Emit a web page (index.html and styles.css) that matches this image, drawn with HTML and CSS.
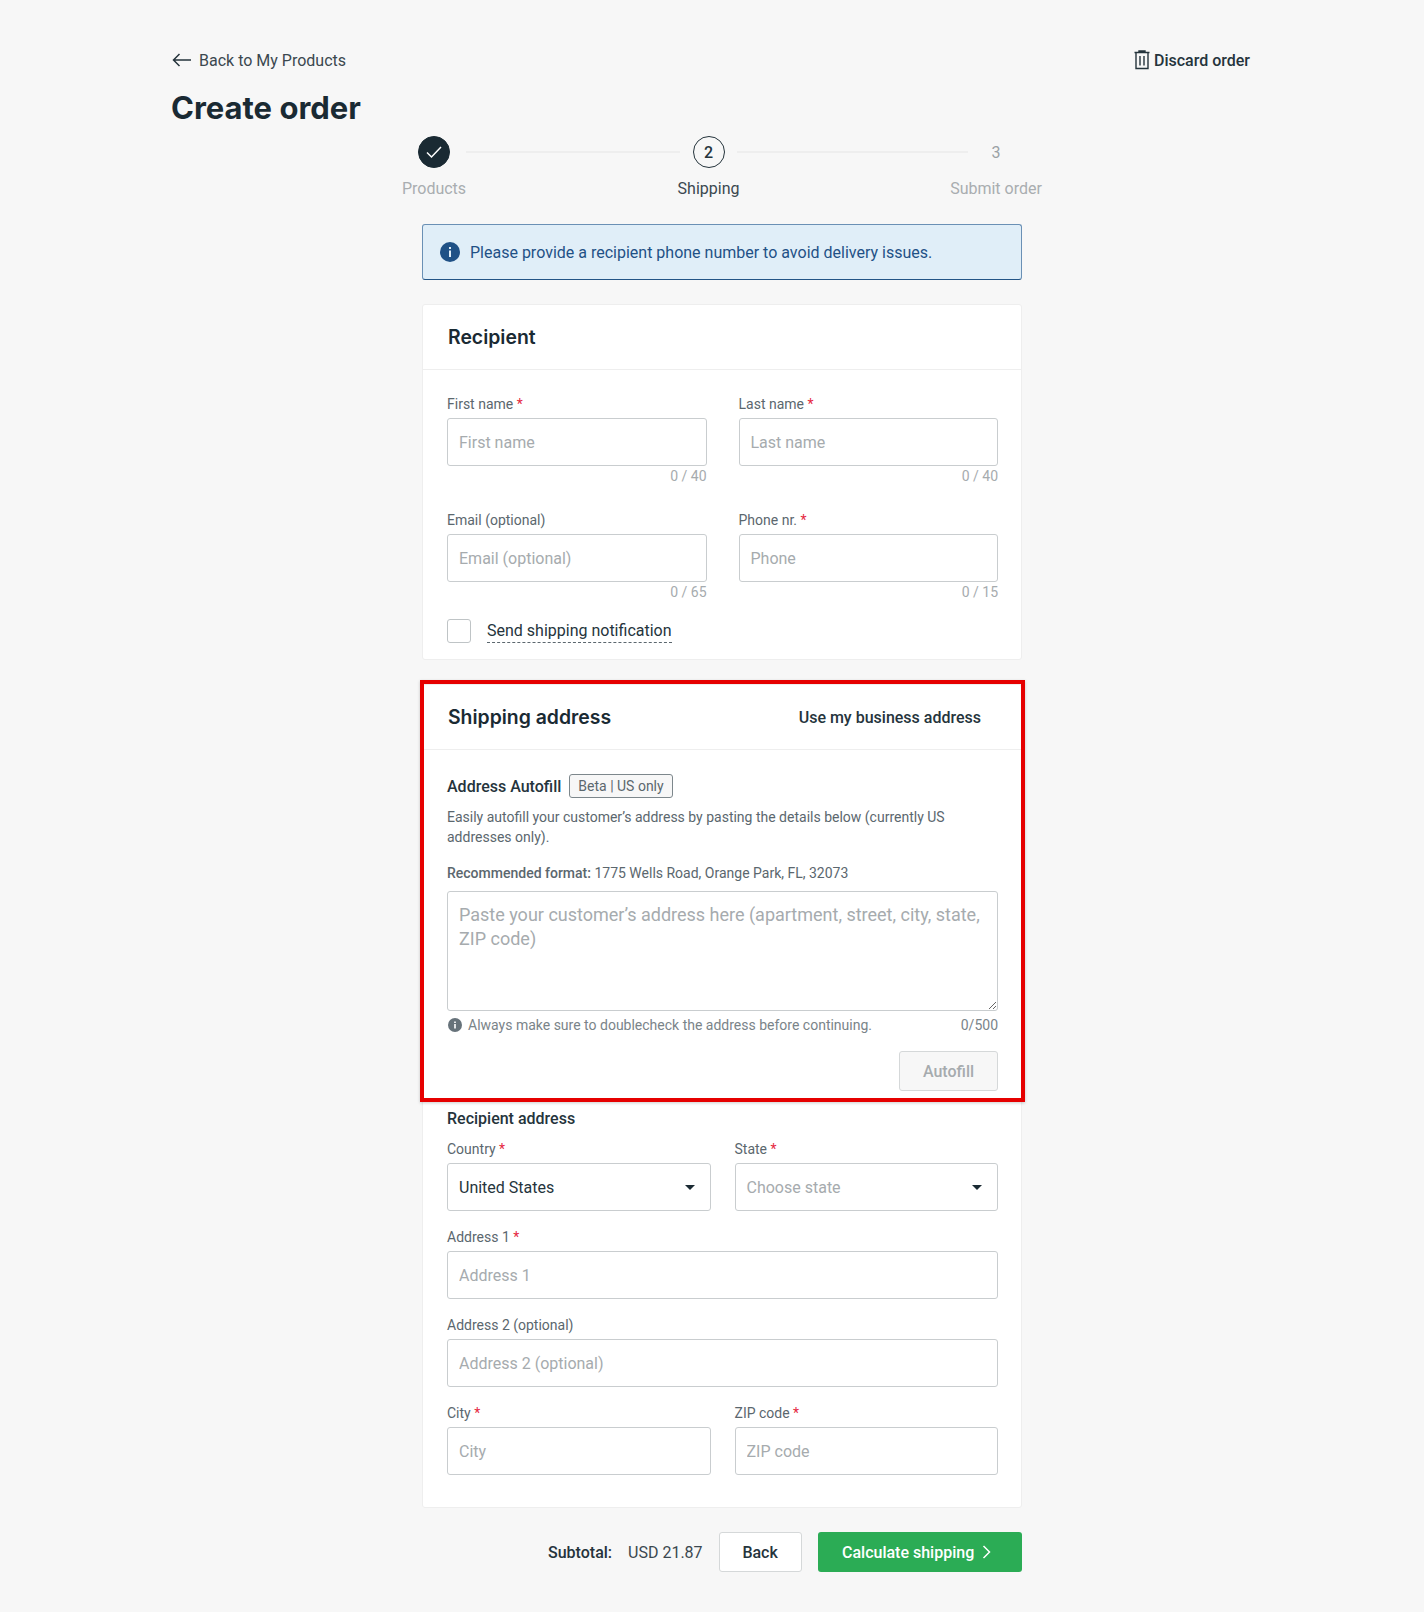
FILE: index.html
```html
<!DOCTYPE html>
<html lang="en">
<head>
<meta charset="utf-8">
<title>Create order</title>
<link rel="stylesheet" href="styles.css">
</head>
<body>
<div class="page">
  <div class="topbar">
    <a class="back-link">
      <svg class="back-icon" width="20" height="14" viewBox="0 0 20 14" fill="none" stroke="#25343c" stroke-width="1.5"><path d="M19 7H1.5M7.5 1L1.5 7l6 6"/></svg>
      Back to My Products
    </a>
    <a class="discard">
      <svg width="16" height="20" viewBox="0 0 16 20" fill="none" stroke="#25343c" stroke-width="1.4"><path d="M0.5 2.5h15M5 2.5V1h6v1.500M2 2.500h12v16H2zM6 6v9.500M10 6v9.500"/></svg>
      Discard order
    </a>
  </div>
  <h1 class="title">Create order</h1>

  <div class="content">
    <div class="stepper">
      <div class="circle done"><svg width="18" height="14" viewBox="0 0 18 14" fill="none" stroke="#fff" stroke-width="1.500"><path d="M2 7.500l4.500 4.500L16 2"/></svg></div>
      <div class="line"></div>
      <div class="circle current">2</div>
      <div class="line"></div>
      <div class="circle pending">3</div>
      <div class="step-label muted">Products</div>
      <div></div>
      <div class="step-label">Shipping</div>
      <div></div>
      <div class="step-label muted">Submit order</div>
    </div>

    <div class="alert">
      <svg width="20" height="20" viewBox="0 0 20 20"><circle cx="10" cy="10" r="10" fill="#1f5186"/><rect x="9" y="8.500" width="2" height="6.500" fill="#e0eef8"/><rect x="9" y="5" width="2" height="2" fill="#e0eef8"/></svg>
      <span>Please provide a recipient phone number to avoid delivery issues.</span>
    </div>

    <section class="card recipient">
      <header class="card-head"><h2 class="card-title">Recipient</h2></header>
      <div class="card-body">
        <div class="grid-two wide-gap">
          <div class="field">
            <label class="label">First name <i class="req">*</i></label>
            <input class="input" placeholder="First name">
            <div class="count">0 / 40</div>
          </div>
          <div class="field">
            <label class="label">Last name <i class="req">*</i></label>
            <input class="input" placeholder="Last name">
            <div class="count">0 / 40</div>
          </div>
          <div class="field">
            <label class="label">Email (optional)</label>
            <input class="input" placeholder="Email (optional)">
            <div class="count">0 / 65</div>
          </div>
          <div class="field">
            <label class="label">Phone nr. <i class="req">*</i></label>
            <input class="input" placeholder="Phone">
            <div class="count">0 / 15</div>
          </div>
        </div>
        <div class="notify">
          <span class="checkbox"></span>
          <span class="notify-text">Send shipping notification</span>
        </div>
      </div>
    </section>

    <section class="card shipping">
      <div class="highlight"></div>
      <header class="card-head split">
        <h2 class="card-title">Shipping address</h2>
        <a class="head-link">Use my business address</a>
      </header>
      <div class="card-body ship-body">
        <div class="autofill-title">
          <strong>Address Autofill</strong>
          <span class="badge">Beta | US only</span>
        </div>
        <p class="desc">Easily autofill your customer’s address by pasting the details below (currently US addresses only).</p>
        <p class="format"><b>Recommended format:</b> 1775 Wells Road, Orange Park, FL, 32073</p>
        <textarea class="textarea" placeholder="Paste your customer’s address here (apartment, street, city, state, ZIP code)"></textarea>
        <div class="hint-row">
          <svg width="14" height="14" viewBox="0 0 14 14"><circle cx="7" cy="7" r="7" fill="#66727a"/><rect x="6.200" y="6" width="1.600" height="4.500" fill="#fff"/><rect x="6.200" y="3.500" width="1.600" height="1.500" fill="#fff"/></svg>
          <span class="hint">Always make sure to doublecheck the address before continuing.</span>
          <span class="hint-count">0/500</span>
        </div>
        <div class="autofill-row"><button class="btn-disabled">Autofill</button></div>

        <h3 class="sub-title">Recipient address</h3>
        <div class="grid-two address-grid">
          <div class="field">
            <label class="label">Country <i class="req">*</i></label>
            <div class="select"><span>United States</span><i class="caret"></i></div>
          </div>
          <div class="field">
            <label class="label">State <i class="req">*</i></label>
            <div class="select placeholder"><span>Choose state</span><i class="caret"></i></div>
          </div>
          <div class="field span-two">
            <label class="label">Address 1 <i class="req">*</i></label>
            <input class="input" placeholder="Address 1">
          </div>
          <div class="field span-two">
            <label class="label">Address 2 (optional)</label>
            <input class="input" placeholder="Address 2 (optional)">
          </div>
          <div class="field">
            <label class="label">City <i class="req">*</i></label>
            <input class="input" placeholder="City">
          </div>
          <div class="field">
            <label class="label">ZIP code <i class="req">*</i></label>
            <input class="input" placeholder="ZIP code">
          </div>
        </div>
      </div>
    </section>

    <footer class="footer">
      <b class="sub-label">Subtotal:</b>
      <span class="sub-value">USD 21.87</span>
      <button class="btn-back">Back</button>
      <button class="btn-primary">Calculate shipping
        <svg width="9" height="14" viewBox="0 0 9 14" fill="none" stroke="#fff" stroke-width="1.500"><path d="M1.500 1l6 6-6 6"/></svg>
      </button>
    </footer>
  </div>
</div>
</body>
</html>
```

FILE: styles.css
```css
* { box-sizing: border-box; }
html, body { margin: 0; padding: 0; }
body {
  background: #f7f7f7;
  color: #25343c;
  font-family: Roboto, "Liberation Sans", sans-serif;
  font-size: 16px;
  height: 1612px;
  overflow: hidden;
}
.page { width: 1078px; margin-left: 172px; padding-top: 47px; }
.topbar { display: flex; justify-content: space-between; align-items: center; height: 26px; }
.back-link { display: flex; align-items: center; gap: 7px; font-size: 16px; color: #3b484f; }
.discard { display: flex; align-items: center; gap: 4px; font-size: 16px; font-weight: 500; color: #25343c; }
.title {
  margin: 15px 0 0 -1px;
  font-family: Inter, sans-serif;
  font-size: 31px;
  line-height: 40px;
  font-weight: 700;
  color: #1a2a33;
}
.content { width: 600px; margin-left: 250px; }

.stepper {
  display: grid;
  grid-template-columns: 64px 214px 57px 231px 56px;
  grid-template-rows: 34px auto;
  row-gap: 8px;
  margin-left: -20px;
  margin-top: 7px;
  justify-items: center;
  align-items: center;
}
.circle {
  width: 32px; height: 32px; border-radius: 50%;
  display: flex; align-items: center; justify-content: center;
  font-size: 16px; font-weight: 500;
}
.done { background: #1a2a33; border: 1px solid #1a2a33; }
.current { border: 1px solid #25343c; color: #25343c; }
.pending { color: #9aa1a5; font-weight: 400; }
.line { width: 100%; height: 2px; background: #eeeeee; }
.step-label { font-size: 16px; line-height: 24px; color: #3b484f; white-space: nowrap; }
.muted { color: #a9adb0; }

.alert {
  margin-top: 23px;
  height: 56px;
  display: flex;
  align-items: center;
  gap: 10px;
  padding: 0 17px;
  background: #e0eef8;
  border: 1px solid #6a90b5;
  border-bottom-color: #235486;
  border-radius: 3px;
  color: #1f5186;
  font-size: 16px;
}

.card {
  position: relative;
  margin-top: 24px;
  background: #fff;
  border: 1px solid #eeeeee;
  border-radius: 3px;
}
.recipient { height: 356px; }
.shipping { margin-top: 24px; height: 824px; }
.card-head { height: 65px; display: flex; align-items: center; padding: 0 25px; border-bottom: 1px solid #eeeeee; }
.split { justify-content: space-between; padding-right: 40px; }
.card-title {
  margin: 0;
  font-family: Inter, sans-serif;
  font-size: 19.4px;
  font-weight: 600;
  color: #1a2a33;
}
.head-link { font-size: 16px; font-weight: 500; }
.card-body { padding: 24px 23px 0 24px; }

.grid-two { display: grid; grid-template-columns: 1fr 1fr; }
.wide-gap { column-gap: 32px; row-gap: 25px; }
.field { display: flex; flex-direction: column; min-width: 0; }
.span-two { grid-column: span 2; }
.label { font-size: 14px; line-height: 20px; color: #5b676e; margin-bottom: 4px; }
.req { font-style: normal; color: #e5283f; }
.input {
  width: 100%;
  height: 48px;
  padding: 0 11px;
  border: 1px solid #c9cdcf;
  border-radius: 3px;
  background: #fff;
  font: 16px Roboto, sans-serif;
  color: #25343c;
}
.input::placeholder, .textarea::placeholder { color: #a6abae; opacity: 1; }
.count { font-size: 14px; line-height: 18px; text-align: right; color: #a6abae; margin-top: 1px; }
.notify { display: flex; align-items: center; gap: 16px; margin-top: 18px; }
.checkbox { width: 24px; height: 24px; border: 1px solid #bfc4c6; border-radius: 3px; background: #fff; }
.notify-text { font-size: 16px; line-height: 22px; color: #25343c; border-bottom: 1px dashed #5b676e; }

.highlight {
  position: absolute;
  left: -3px; top: -5px;
  width: 605px; height: 422px;
  border: 4px solid #e60000;
  box-shadow: 0 1px 3px rgba(0,0,0,.2);
  pointer-events: none;
}
.ship-body { padding-top: 24px; }
.autofill-title { display: flex; align-items: center; gap: 8px; height: 24px; }
.autofill-title strong { font-size: 16px; font-weight: 500; }
.badge {
  height: 24px; padding: 0 8px;
  display: flex; align-items: center;
  font-size: 14px; color: #5b676e;
  background: #f7f7f7;
  border: 1px solid #7d878c;
  border-radius: 3px;
}
.desc { margin: 9px 0 0; font-size: 14px; line-height: 20px; color: #5b676e; }
.format { margin: 16px 0 0; font-size: 14px; line-height: 20px; color: #5b676e; }
.format b { font-weight: 500; }
.textarea {
  display: block;
  width: 100%;
  height: 120px;
  margin-top: 8px;
  padding: 11px;
  border: 1px solid #c9cdcf;
  border-radius: 3px;
  font: 18px/24px Roboto, sans-serif;
  color: #25343c;
}
.hint-row { display: flex; align-items: center; gap: 6px; height: 20px; margin-top: 4px; padding-left: 1px; }
.hint { font-size: 14px; color: #7a8489; flex: 1; }
.hint-count { font-size: 14px; color: #7a8489; }
.autofill-row { display: flex; justify-content: flex-end; margin-top: 16px; }
.btn-disabled {
  width: 99px; height: 40px;
  background: #f7f7f7;
  border: 1px solid #d5d8d9;
  border-radius: 3px;
  color: #a6abae;
  font: 500 16px Roboto, sans-serif;
}
.sub-title { margin: 17px 0 0; font-size: 16px; line-height: 22px; font-weight: 500; }
.address-grid { column-gap: 24px; row-gap: 16px; margin-top: 9px; }
.select {
  height: 48px;
  display: flex; align-items: center; justify-content: space-between;
  padding: 0 15px 0 11px;
  border: 1px solid #c9cdcf;
  border-radius: 3px;
  background: #fff;
  color: #25343c;
}
.placeholder { color: #a6abae; }
.caret { width: 0; height: 0; border-left: 5px solid transparent; border-right: 5px solid transparent; border-top: 5px solid #1a2a33; }

.footer { display: flex; align-items: center; margin-top: 24px; padding-left: 126px; }
.sub-label { font-size: 16px; font-weight: 500; }
.sub-value { font-size: 16px; color: #3b484f; margin-left: 16px; }
.btn-back {
  width: 83px; height: 40px; margin-left: 16px;
  background: #fff;
  border: 1px solid #d5d8d9;
  border-radius: 3px;
  color: #25343c;
  font: 500 16px Roboto, sans-serif;
}
.btn-primary {
  width: 204px; height: 40px; margin-left: 16px;
  display: flex; align-items: center; justify-content: center; gap: 8px;
  padding: 0 6px 0 0;
  background: #2bac55;
  border: 0;
  border-radius: 3px;
  color: #fff;
  font: 500 16px Roboto, sans-serif;
}
```
